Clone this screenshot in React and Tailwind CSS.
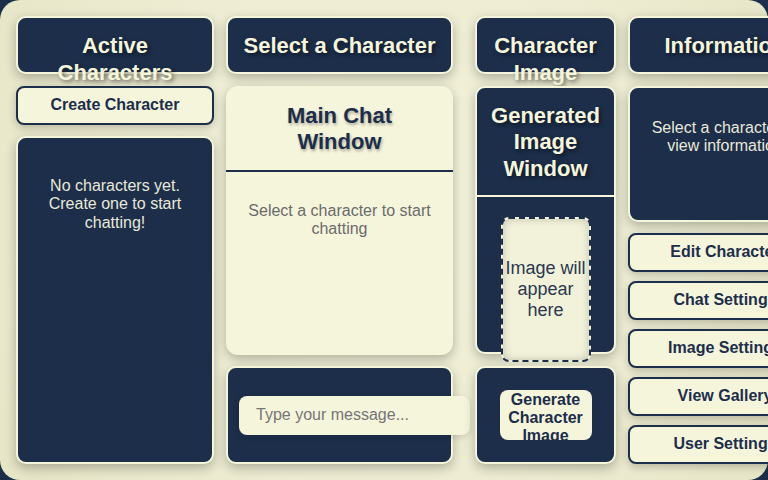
const navyBox =
  "bg-[#1c2e4a] border-2 border-[#f5f5dc] rounded-[10px] shadow-[0_4px_12px_rgba(0,0,0,0.28)]";
const creamBtn =
  "bg-[#f5f5dc] border-2 border-[#1c2e4a] rounded-[8px] shadow-[0_3px_8px_rgba(0,0,0,0.22)] text-[#1c2e4a] font-bold text-[16px] leading-[1.15] flex items-center justify-center shrink-0";
const headShadow = "[text-shadow:2px_2px_4px_rgba(0,0,0,0.5)]";

// Header panel at the top of every column
const Header = ({ children }) => (
  <div
    className={`${navyBox} h-[58px] shrink-0 pt-[15px] px-3 text-center text-[22px] leading-[1.22] font-bold text-[#f5f5dc] ${headShadow}`}
  >
    {children}
  </div>
);

const App = () => {
  const menu = ["Edit Character", "Chat Settings", "Image Settings", "View Gallery", "User Settings"];

  return (
    <div className="w-[768px] h-[480px] overflow-hidden bg-[#1c2e4a] font-['Liberation_Sans',Arial,sans-serif]">
      <div className="w-full h-full rounded-[20px] bg-[radial-gradient(circle_at_50%_45%,#f4f3dc_0%,#eeedd3_60%,#e6e5c6_100%)] flex p-4">
        {/* Active characters */}
        <div className="w-[198px] shrink-0 flex flex-col">
          <Header>Active Characters</Header>
          <button className={`${creamBtn} mt-3 h-[39px]`}>Create Character</button>
          <div className={`${navyBox} mt-[11px] flex-1 px-5 pt-[39px] text-center text-[16px] leading-[1.15] text-[#e8e8d8]`}>
            No characters yet. Create one to start chatting!
          </div>
        </div>

        {/* Chat */}
        <div className="w-[227px] shrink-0 flex flex-col ml-3 mr-[22px]">
          <Header>Select a Character</Header>
          <div className="mt-3 h-[269px] shrink-0 bg-[#f5f5dc] rounded-[12px] shadow-[0_4px_12px_rgba(0,0,0,0.28)] flex flex-col">
            <div className="px-5 pt-[17px] pb-[14px] border-b-2 border-[#1c2e4a] text-center text-[22px] leading-[1.2] font-bold text-[#1c2e4a] [text-shadow:1px_2px_3px_rgba(0,0,0,0.3)]">
              Main Chat Window
            </div>
            <div className="px-5 pt-[30px] text-center text-[16px] leading-[1.15] text-[#6b6b6b]">
              Select a character to start chatting
            </div>
          </div>
          <div className={`${navyBox} mt-[11px] flex-1 flex items-center pl-[11px]`}>
            <input
              placeholder="Type your message..."
              className="w-[231px] shrink-0 h-[39px] rounded-[8px] bg-[#f5f5dc] pl-[17px] text-[16px] text-[#1c2e4a] placeholder:text-[#757575] outline-none shadow-[0_2px_6px_rgba(0,0,0,0.15)]"
            />
          </div>
        </div>

        {/* Image */}
        <div className="w-[141px] shrink-0 flex flex-col">
          <Header>Character Image</Header>
          <div className={`${navyBox} mt-3 h-[268px] shrink-0 flex flex-col items-center`}>
            <div className={`w-full px-2 pt-[15px] pb-[13px] border-b-2 border-[#f5f5dc] text-center text-[22px] leading-[1.2] font-bold text-[#f5f5dc] ${headShadow}`}>
              Generated Image Window
            </div>
            <div className="mt-[20px] w-[90px] h-[145px] shrink-0 bg-[#f2f1d9] border-2 border-dashed border-[#1c2e4a] rounded-[8px] shadow-[inset_0_0_8px_rgba(0,0,0,0.2)] flex items-center justify-center text-center text-[18px] leading-[21px] text-[#2a3850]">
              Image will appear here
            </div>
          </div>
          <div className={`${navyBox} mt-3 flex-1 flex items-center justify-center`}>
            <div className="w-[92px] h-[50px] overflow-hidden bg-[#f5f5dc] rounded-[8px] px-2 pt-[1px] text-center text-[16px] leading-[18px] font-bold text-[#1c2e4a]">
              Generate Character Image
            </div>
          </div>
        </div>

        {/* Information */}
        <div className="w-[194px] shrink-0 flex flex-col ml-3">
          <Header>Information</Header>
          <div className={`${navyBox} mt-3 h-[136px] shrink-0 px-5 pt-[31px] text-center text-[16px] leading-[1.15] text-[#e8e8d8]`}>
            Select a character to view information
          </div>
          <div className="mt-[11px] flex flex-col gap-[9px]">
            {menu.map((m) => (
              <button key={m} className={`${creamBtn} h-[39px]`}>
                {m}
              </button>
            ))}
          </div>
        </div>
      </div>
    </div>
  );
};

export default App;
